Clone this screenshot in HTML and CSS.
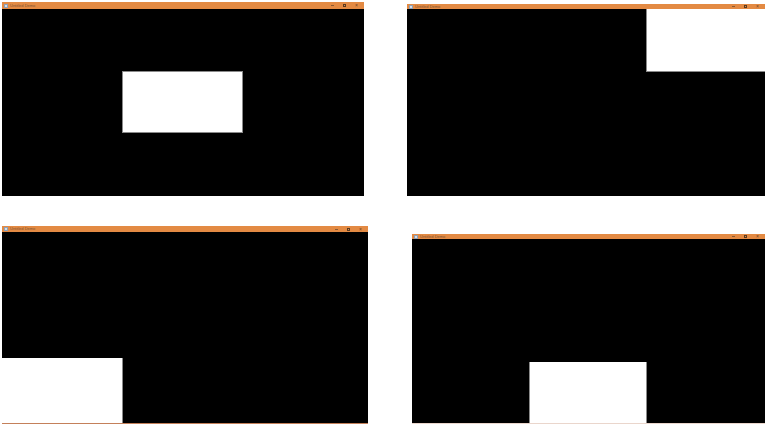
FILE: index.html
```html
<!DOCTYPE html>
<html>
<head>
<meta charset="utf-8">
<link rel="stylesheet" href="styles.css">
</head>
<body>
<div class="desk">
  <div class="win w1">
    <div class="title"><span class="ico"></span><span class="name">Untitled Demo</span><span class="ctrl"><span class="min"></span><span class="max"></span><span class="cls">×</span></span></div>
    <div class="view"><div class="rect r1"></div></div>
  </div>
  <div class="win w2">
    <div class="title"><span class="ico"></span><span class="name">Untitled Demo</span><span class="ctrl"><span class="min"></span><span class="max"></span><span class="cls">×</span></span></div>
    <div class="view"><div class="rect r2"></div></div>
  </div>
  <div class="win w3">
    <div class="title"><span class="ico"></span><span class="name">Untitled Demo</span><span class="ctrl"><span class="min"></span><span class="max"></span><span class="cls">×</span></span></div>
    <div class="view"><div class="rect r3"></div></div>
  </div>
  <div class="win w4">
    <div class="title"><span class="ico"></span><span class="name">Untitled Demo</span><span class="ctrl"><span class="min"></span><span class="max"></span><span class="cls">×</span></span></div>
    <div class="view"><div class="rect r4"></div></div>
  </div>
</div>
</body>
</html>
```
FILE: styles.css
```css
html, body { margin: 0; padding: 0; background: #ffffff; }
.desk { position: relative; width: 768px; height: 428px; overflow: hidden; font-family: "Liberation Sans", Arial, sans-serif; }
.win { position: absolute; display: flex; flex-direction: column; background: #000; }
.title { flex: none; background: #e38a43; display: flex; align-items: center; overflow: hidden; }
.ico { width: 4px; height: 4px; margin: 0 2px 0 2px; background: #d8dde4; border: 1px solid #8ca0b8; box-sizing: border-box; }
.name { font-size: 4px; line-height: 4px; color: #7a5535; white-space: nowrap; }
.ctrl { margin-left: auto; display: flex; align-items: center; gap: 9px; padding-right: 6px; }
.min { width: 3px; height: 1px; background: #8a5a34; }
.max { width: 3px; height: 3px; border: 1px solid #5a3a20; box-sizing: border-box; }
.cls { font-size: 5px; line-height: 5px; color: #6a4426; }
.view { flex: 1; position: relative; overflow: hidden; }
.rect { position: absolute; background: #fff; box-sizing: border-box; border: 1px solid #8a8a8a; }
.w1 { left: 2px; top: 2px; width: 362px; height: 194px; }
.w1 .title { height: 7px; }
.r1 { left: 120px; top: 62px; width: 121px; height: 62px; }
.w2 { left: 407px; top: 4px; width: 358px; height: 192px; }
.w2 .title { height: 5px; }
.r2 { left: 239px; top: 0; width: 119px; height: 63px; border-width: 0 0 1px 1px; }
.w3 { left: 2px; top: 226px; width: 366px; height: 197px; border-bottom: 1px solid #c4805a; }
.w3 .title { height: 6px; }
.r3 { left: 0; top: 126px; width: 121px; height: 65px; border-width: 0 1px 0 0; }
.w4 { left: 412px; top: 234px; width: 353px; height: 189px; border-bottom: 1px solid #ead6cc; }
.w4 .title { height: 5px; }
.r4 { left: 117px; top: 123px; width: 118px; height: 61px; border-width: 0 1px 0 1px; }
```
